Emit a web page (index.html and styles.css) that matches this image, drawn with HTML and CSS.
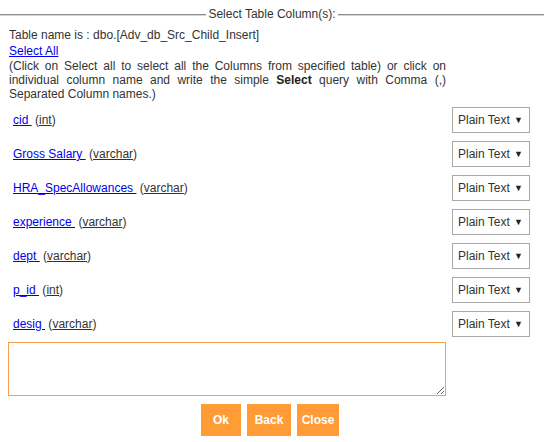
FILE: index.html
```
<!DOCTYPE html>
<html>
<head>
<meta charset="utf-8">
<link rel="stylesheet" href="styles.css">
</head>
<body>
<div class="panel">
  <div class="legend">
    <span class="rule"></span>
    <span class="legend-text">Select Table Column(s):</span>
    <span class="rule"></span>
  </div>
  <div class="info">
    <div class="tname">Table name is : dbo.[Adv_db_Src_Child_Insert]</div>
    <div class="selall"><a href="#">Select All</a></div>
    <p class="hint">(Click on Select all to select all the Columns from specified table) or click on individual column name and write the simple <b>Select</b> query with Comma (,) Separated Column names.)</p>
  </div>
  <div class="rows">
    <div class="row"><div class="col"><a href="#">cid&nbsp;</a> (<u>int</u>)</div><div class="sel"><span>Plain Text</span><span class="arr">▼</span></div></div>
    <div class="row"><div class="col"><a href="#">Gross Salary&nbsp;</a> (<u>varchar</u>)</div><div class="sel"><span>Plain Text</span><span class="arr">▼</span></div></div>
    <div class="row"><div class="col"><a href="#">HRA_SpecAllowances&nbsp;</a> (<u>varchar</u>)</div><div class="sel"><span>Plain Text</span><span class="arr">▼</span></div></div>
    <div class="row"><div class="col"><a href="#">experience&nbsp;</a> (<u>varchar</u>)</div><div class="sel"><span>Plain Text</span><span class="arr">▼</span></div></div>
    <div class="row"><div class="col"><a href="#">dept&nbsp;</a> (<u>varchar</u>)</div><div class="sel"><span>Plain Text</span><span class="arr">▼</span></div></div>
    <div class="row"><div class="col"><a href="#">p_id&nbsp;</a> (<u>int</u>)</div><div class="sel"><span>Plain Text</span><span class="arr">▼</span></div></div>
    <div class="row"><div class="col"><a href="#">desig&nbsp;</a> (<u>varchar</u>)</div><div class="sel"><span>Plain Text</span><span class="arr">▼</span></div></div>
  </div>
  <textarea class="query"></textarea>
  <div class="buttons">
    <button class="btn btn-ok">Ok</button>
    <button class="btn btn-back">Back</button>
    <button class="btn btn-close">Close</button>
  </div>
</div>
</body>
</html>
```
FILE: styles.css
```
* { box-sizing: border-box; }
html, body { margin: 0; padding: 0; background: #fff; }
body {
  font-family: "Liberation Sans", Arial, sans-serif;
  font-size: 12px;
  color: #333;
}
.panel { width: 544px; }
.legend {
  display: flex;
  align-items: center;
  height: 28px;
}
.rule {
  flex: 1;
  height: 2px;
  border-top: 1px solid #8c8c8c;
  border-bottom: 1px solid #d6d6d6;
  margin-top: 1px;
}
.legend-text { padding: 0 2px; line-height: 14px; }
.info { padding-left: 9px; width: 446px; }
.tname { line-height: 14px; }
.selall { line-height: 16px; margin-top: 1px; }
.selall a, .col a { color: #00e; }
.hint {
  margin: 0;
  line-height: 14px;
  text-align: justify;
}
.hint b { color: #222; }
.rows { margin-top: 2px; }
.row {
  display: flex;
  align-items: center;
  height: 34px;
}
.col {
  width: 452px;
  padding-left: 13px;
}
.sel {
  width: 78px;
  height: 26px;
  border: 1px solid #a9a9a9;
  display: flex;
  align-items: center;
  justify-content: space-between;
  padding: 0 6px 0 5px;
  color: #333;
}
.arr { font-size: 9px; color: #222; }
.query {
  display: block;
  margin: 1px 0 0 8px;
  width: 438px;
  height: 54px;
  border: 1px solid #f7a24a;
  resize: both;
  font-family: inherit;
}
.buttons {
  display: flex;
  gap: 6px;
  margin: 8px 0 0 201px;
}
.btn {
  background: #ff9c36;
  color: #fff;
  border: none;
  font-family: "Liberation Sans", Arial, sans-serif;
  font-size: 12px;
  font-weight: bold;
  height: 32px;
  padding: 0;
}
.btn-ok { width: 40px; }
.btn-back { width: 44px; }
.btn-close { width: 42px; }
```
